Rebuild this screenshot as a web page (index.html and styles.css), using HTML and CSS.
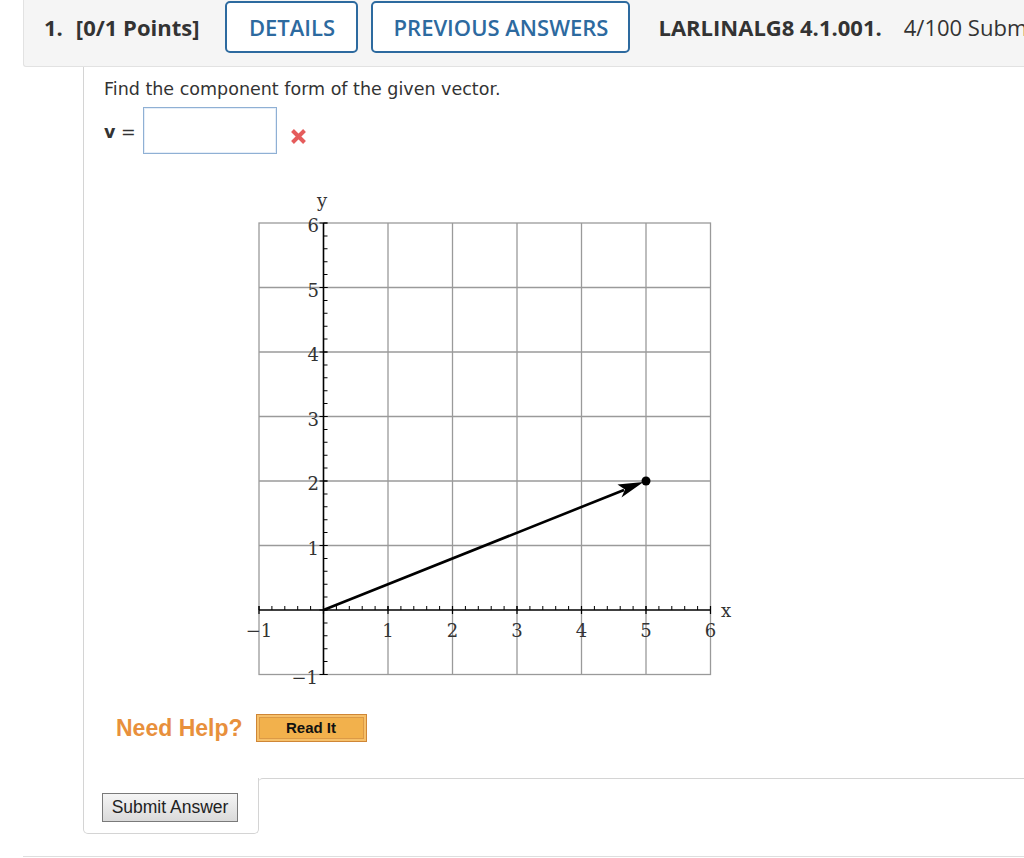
FILE: index.html
```html
<!DOCTYPE html>
<html>
<head>
<meta charset="utf-8">
<link rel="stylesheet" href="styles.css">
</head>
<body>
<div class="question">
  <div class="qhead">
    <span class="qnum">1.</span>
    <span class="qpts">[0/1 Points]</span>
    <button class="hbtn hbtn-details">DETAILS</button>
    <button class="hbtn hbtn-prev">PREVIOUS ANSWERS</button>
    <span class="qid">LARLINALG8 4.1.001.</span>
    <span class="qsub">4/100 Submissions Used</span>
  </div>
  <div class="qbody">
    <div class="qcontent">
      <p class="prompt">Find the component form of the given vector.</p>
      <div class="answer-row">
        <span class="vlabel"><b>v</b> =</span>
        <span class="ansbox"></span>
        <svg class="wrong" viewBox="0 0 17 17">
          <path d="M2.5 2.5 L14.5 14.5 M14.5 2.5 L2.5 14.5" stroke="#e55c5c" stroke-width="4" fill="none"/>
        </svg>
      </div>
      <svg class="graph" viewBox="0 0 510 500">
        <g stroke="#9a9a9a" stroke-width="1.3" fill="none">
          <rect x="29" y="33" width="451.5" height="451.5"/>
          <path d="M158 33V484.5 M222.5 33V484.5 M287 33V484.5 M351.5 33V484.5 M416 33V484.5"/>
          <path d="M29 97.5H480.5 M29 162H480.5 M29 226.5H480.5 M29 291H480.5 M29 355.5H480.5"/>
        </g>
        <g stroke="#000" fill="none">
          <line x1="93.5" y1="33" x2="93.5" y2="484.5" stroke-width="1.6"/>
          <line x1="29" y1="420" x2="480.5" y2="420" stroke-width="1.6"/>
          <line x1="95.5" y1="32.5" x2="95.5" y2="485.5" stroke-width="4" stroke-dasharray="1 11.9"/>
          <line x1="28.5" y1="418" x2="481.5" y2="418" stroke-width="4" stroke-dasharray="1 11.9"/>
          <line x1="93.5" y1="32.4" x2="93.5" y2="485.5" stroke-width="8" stroke-dasharray="1.2 63.3"/>
          <line x1="28.4" y1="420" x2="481.5" y2="420" stroke-width="8" stroke-dasharray="1.2 63.3"/>
        </g>
        <g class="lbl" text-anchor="end">
          <text x="89" y="42">6</text>
          <text x="89" y="106.5">5</text>
          <text x="89" y="171">4</text>
          <text x="89" y="235.5">3</text>
          <text x="89" y="300">2</text>
          <text x="89" y="364.5">1</text>
          <text x="88" y="493.5">−1</text>
        </g>
        <g class="lbl" text-anchor="middle">
          <text x="29" y="447">−1</text>
          <text x="158" y="447">1</text>
          <text x="222.5" y="447">2</text>
          <text x="287" y="447">3</text>
          <text x="351.5" y="447">4</text>
          <text x="416" y="447">5</text>
          <text x="480.5" y="447">6</text>
          <text x="92" y="16.5">y</text>
          <text x="496" y="427">x</text>
        </g>
        <line x1="93.5" y1="420" x2="394" y2="300" stroke="#000" stroke-width="2.6"/>
        <polygon points="413.5,292 391.5,307.5 395,299.5 387.5,294.5" fill="#000"/>
        <circle cx="416" cy="291" r="4.5" fill="#000"/>
      </svg>
      <div class="help-row">
        <span class="need-help">Need Help?</span>
        <span class="read-it">Read It</span>
      </div>
    </div>
    <div class="qfoot">
      <div class="submit-cell"><button class="submit">Submit Answer</button></div>
      <div class="foot-rest"></div>
    </div>
  </div>
</div>
</body>
</html>
```
FILE: styles.css
```css
html, body {
  margin: 0;
  padding: 0;
  overflow: hidden;
  background: #fff;
}

.question {
  margin-left: 23px;
  padding-bottom: 22px;
  border-bottom: 1px solid #dedede;
}

.qhead {
  display: flex;
  align-items: center;
  height: 52px;
  padding: 1px 0 13px 20px;
  background: #f5f5f5;
  border-left: 1px solid #e2e2e2;
  border-bottom: 1px solid #e2e2e2;
  border-bottom-left-radius: 3px;
  white-space: nowrap;
  overflow: hidden;
  font-family: "Open Sans", sans-serif;
  font-size: 22px;
  color: #333;
}

.qnum {
  font-weight: 700;
  margin-right: 13px;
}

.qpts {
  font-weight: 700;
  margin-right: 26px;
}

.hbtn {
  flex: none;
  height: 52px;
  box-sizing: border-box;
  border: 2px solid #2d6a9f;
  border-radius: 5px;
  background: #fff;
  color: #2d6a9f;
  font-family: "Open Sans", sans-serif;
  font-weight: 600;
  font-size: 22px;
  padding: 0;
  text-align: center;
}

.hbtn-details {
  width: 133px;
  margin-right: 13px;
}

.hbtn-prev {
  width: 259px;
  margin-right: 28px;
}

.qid {
  font-weight: 700;
  margin-right: 22px;
}

.qsub {
  font-weight: 400;
}

.qbody {
  margin-left: 60px;
}

.qcontent {
  border-left: 1px solid #d4d4d4;
  padding: 12px 0 36px 20px;
}

.prompt {
  margin: 0;
  font-family: "DejaVu Sans", sans-serif;
  font-size: 17.5px;
  line-height: 20px;
  color: #333;
}

.answer-row {
  display: flex;
  align-items: flex-start;
  margin-top: 8px;
  height: 47px;
}

.vlabel {
  width: 39px;
  margin-top: 15px;
  font-family: "DejaVu Sans", sans-serif;
  font-size: 17.5px;
  line-height: 20px;
  color: #333;
}

.ansbox {
  width: 134px;
  height: 47px;
  box-sizing: border-box;
  border: 1px solid #8fb0d4;
  box-shadow: inset 0 0 0 1px #e6eef8;
  background: #fff;
}

.wrong {
  width: 17px;
  height: 17px;
  margin: 21px 0 0 13px;
}

.graph {
  display: block;
  width: 510px;
  height: 500px;
  margin: 36px 0 0 126px;
}

.lbl {
  font-family: "DejaVu Serif", serif;
  font-size: 18px;
  fill: #333;
}

.help-row {
  display: flex;
  align-items: center;
  height: 28px;
  margin: 24px 0 0 12px;
}

.need-help {
  font-family: "Liberation Sans", Arial, sans-serif;
  font-weight: 700;
  font-size: 23px;
  line-height: 28px;
  color: #e8903c;
  margin-right: 13px;
}

.read-it {
  width: 111px;
  height: 28px;
  box-sizing: border-box;
  border: 1px solid #cf8636;
  background: #f2b14c;
  box-shadow: inset 0 0 0 2px #f6c06a, inset 0 0 0 3px #dc9a46;
  font-family: "Liberation Sans", Arial, sans-serif;
  font-weight: 700;
  font-size: 15px;
  line-height: 26px;
  text-align: center;
  color: #111;
}

.qfoot {
  display: flex;
}

.submit-cell {
  width: 176px;
  box-sizing: border-box;
  padding: 15px 0 11px 18px;
  border-left: 1px solid #d4d4d4;
  border-right: 1px solid #d4d4d4;
  border-bottom: 1px solid #d4d4d4;
  border-radius: 0 0 5px 5px;
}

.submit {
  display: block;
  width: 136px;
  height: 29px;
  padding: 0;
  border: 1px solid #7a7a7a;
  background: linear-gradient(#f5f5f5, #dadada);
  font-family: "Liberation Sans", Arial, sans-serif;
  font-size: 17.5px;
  color: #222;
}

.foot-rest {
  flex: 1;
  margin-left: -1px;
  border-top: 1px solid #d4d4d4;
  border-top-left-radius: 5px;
}
```
